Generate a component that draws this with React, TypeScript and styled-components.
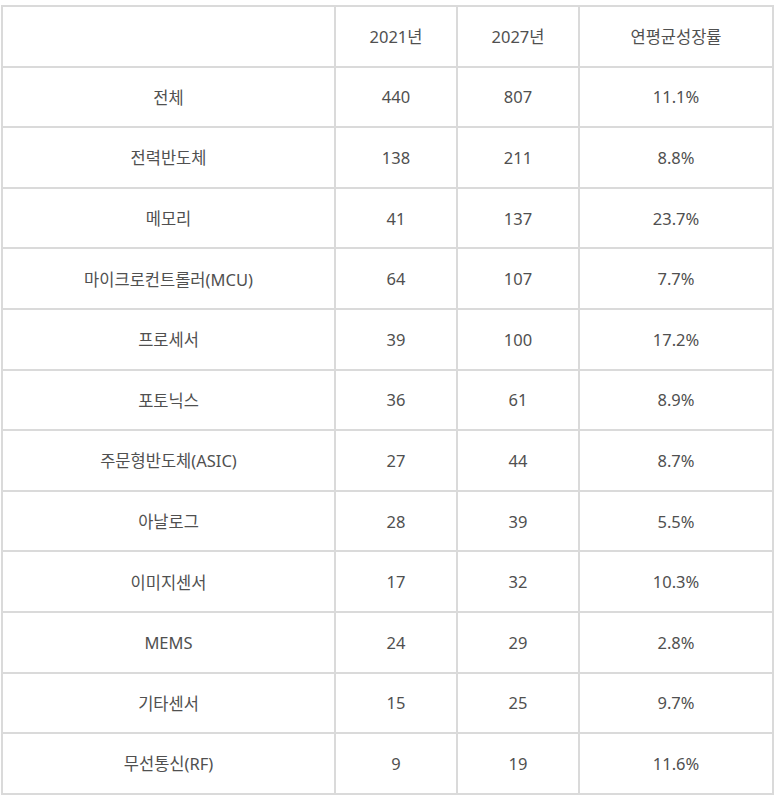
import styled, { createGlobalStyle } from 'styled-components';

const rows: [string, string, string, string][] = [
  ['전체', '440', '807', '11.1%'],
  ['전력반도체', '138', '211', '8.8%'],
  ['메모리', '41', '137', '23.7%'],
  ['마이크로컨트롤러(MCU)', '64', '107', '7.7%'],
  ['프로세서', '39', '100', '17.2%'],
  ['포토닉스', '36', '61', '8.9%'],
  ['주문형반도체(ASIC)', '27', '44', '8.7%'],
  ['아날로그', '28', '39', '5.5%'],
  ['이미지센서', '17', '32', '10.3%'],
  ['MEMS', '24', '29', '2.8%'],
  ['기타센서', '15', '25', '9.7%'],
  ['무선통신(RF)', '9', '19', '11.6%'],
];

const GlobalStyle = createGlobalStyle`
  body {
    margin: 0;
    background: #fff;
    font-family: "Noto Sans", "Noto Sans CJK KR", sans-serif;
  }
`;

const App = () => {
  return (
    <Page>
      <GlobalStyle />
      <Table>
        <colgroup>
          <col style={{ width: 333 }} />
          <col style={{ width: 122 }} />
          <col style={{ width: 122 }} />
          <col />
        </colgroup>
        <thead>
          <tr>
            <Cell as="th" />
            <Cell as="th">2021년</Cell>
            <Cell as="th">2027년</Cell>
            <Cell as="th">연평균성장률</Cell>
          </tr>
        </thead>
        <tbody>
          {rows.map((r) => (
            <tr key={r[0]}>
              {r.map((v, i) => (
                <Cell key={i}>{v}</Cell>
              ))}
            </tr>
          ))}
        </tbody>
      </Table>
    </Page>
  );
};

const Page = styled.div`
  padding: 5px 2px 0 1px;
`;

const Table = styled.table`
  width: 773px;
  border-collapse: collapse;
  table-layout: fixed;
  border: 2px solid #dadada;
`;

const Cell = styled.td`
  height: 58.6px;
  padding: 0;
  border: 2px solid #dadada;
  text-align: center;
  vertical-align: middle;
  font-size: 16.5px;
  font-weight: normal;
  color: #505050;
`;

export default App;
